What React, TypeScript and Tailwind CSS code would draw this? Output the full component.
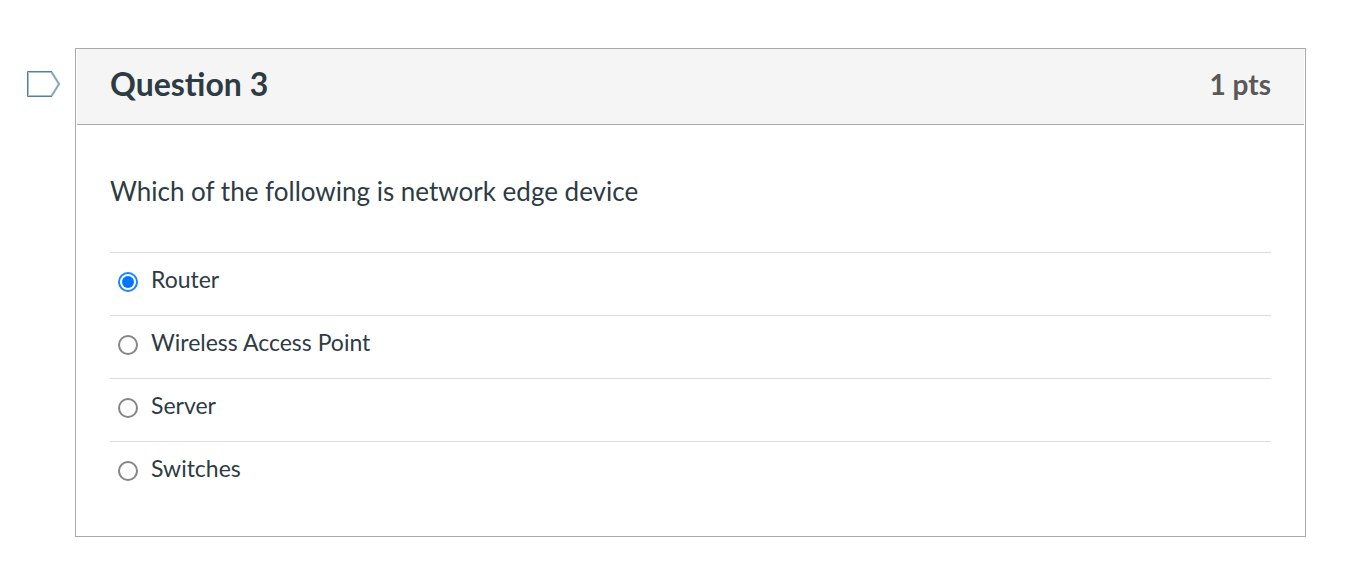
import { useState } from 'react'

const answers = ['Router', 'Wireless Access Point', 'Server', 'Switches']

function FlagButton() {
    const [flagged, setFlagged] = useState(false)

    return (
        <button
            type="button"
            aria-label="Flag question"
            aria-pressed={flagged}
            onClick={() => setFlagged(!flagged)}
            className="mt-[23px] h-[26px] w-[34px] shrink-0"
        >
            <svg width="34" height="26" viewBox="0 0 34 26" fill={flagged ? '#fcd116' : 'none'}>
                <path d="M25 1.5H1.5V24.5H25" stroke="#a3c0cf" />
                <path d="M24.5 1L32 13L24.5 25" stroke="#87aabd" strokeWidth="2.2" />
                <path d="M25 0.5H0.5V25.5H25" stroke="#53819b" />
            </svg>
        </button>
    )
}

export default function App() {
    const [selected, setSelected] = useState('Router')

    return (
        <main className="flex min-h-screen items-start bg-white pt-12 pr-[51px] pb-10 pl-[27px] font-[Lato,sans-serif] text-[#2d3b45]">
            <FlagButton />
            <section className="ml-[14px] flex-1 border border-[#aaaaaa]">
                <header className="mx-px flex h-[76px] items-center justify-between border-b border-[#aaaaaa] bg-[#f5f5f5] px-[33px] pb-1.5">
                    <h2 className="text-[32px] leading-10 font-bold">Question 3</h2>
                    <span className="text-[28px] leading-10 font-bold text-[#595959]">1 pts</span>
                </header>
                <div className="px-[34px] pt-[46px] pb-8">
                    <p id="question-text" className="text-[26px] leading-10">
                        Which of the following is network edge device
                    </p>
                    <fieldset aria-labelledby="question-text" className="mt-[41px]">
                        {answers.map((answer) => (
                            <label
                                key={answer}
                                className="flex h-[63px] items-center border-t border-[#dddddd] pb-2.5 pl-2 text-[23px] leading-8"
                            >
                                <input
                                    type="radio"
                                    name="answer"
                                    value={answer}
                                    checked={selected === answer}
                                    onChange={() => setSelected(answer)}
                                    className="mt-1.5 mr-[13px] flex size-5 appearance-none items-center justify-center rounded-full border-2 border-[#858585] before:size-3 before:rounded-full checked:border-[#1a83ff] checked:before:bg-[#0075ff]"
                                />
                                {answer}
                            </label>
                        ))}
                    </fieldset>
                </div>
            </section>
        </main>
    )
}
